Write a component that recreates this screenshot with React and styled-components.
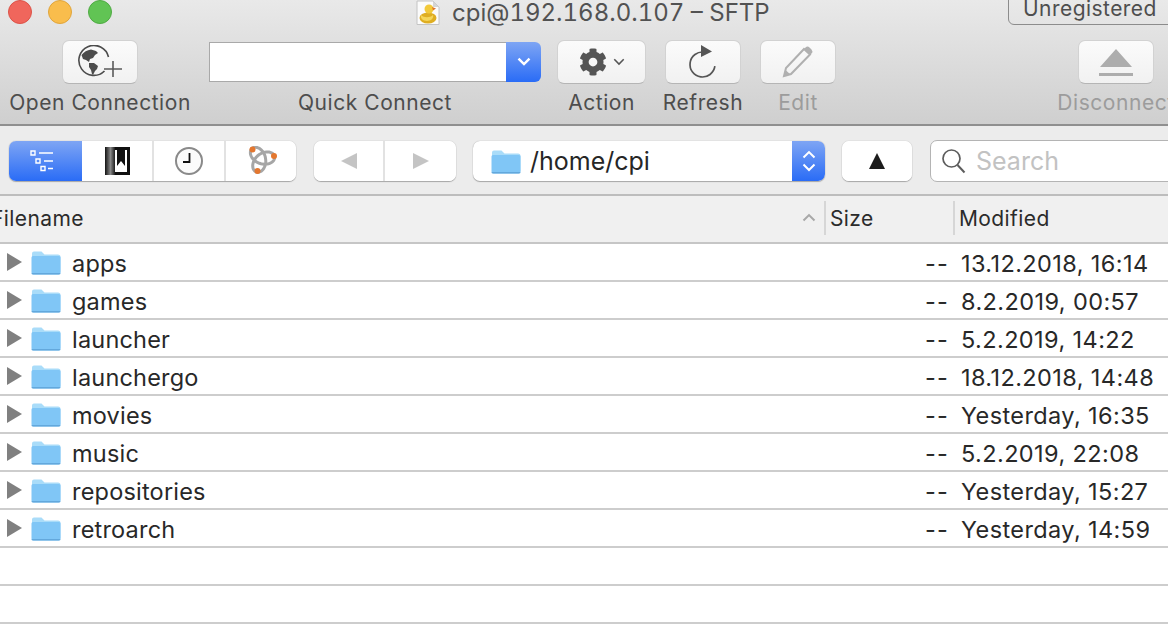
import React from 'react'
import styled, { createGlobalStyle } from 'styled-components'
import { FaCog } from 'react-icons/fa'

const GlobalStyle = createGlobalStyle`
  html, body {
    margin: 0;
    padding: 0;
    overflow: hidden;
    background: #fff;
  }
`

const Window = styled.div`
  width: 1168px;
  height: 630px;
  overflow: hidden;
  font-family: Inter, "Liberation Sans", sans-serif;
  background: #fff;
`

const TitleArea = styled.div`
  height: 124px;
  background: linear-gradient(#e9e9e9, #cfcfcf);
  border-bottom: 2px solid #8f8f8f;
  overflow: hidden;
`

const TitleRow = styled.div`
  height: 40px;
  display: grid;
  grid-template-columns: 416px 1fr auto;
  align-items: start;
`

const Lights = styled.div`
  display: flex;
  gap: 16px;
  padding-left: 8px;
`

const Light = styled.div`
  width: 24px;
  height: 24px;
  border-radius: 50%;
  box-sizing: border-box;
  background: ${p => p.$color};
  border: 1px solid ${p => p.$edge};
`

const WindowTitle = styled.div`
  display: flex;
  align-items: center;
  gap: 12px;
  height: 24px;
  font-size: 24px;
  font-variant-numeric: tabular-nums;
  color: #525252;
  white-space: nowrap;
`

const Badge = styled.div`
  width: 170px;
  height: 35px;
  margin: -10px -10px 0 0;
  box-sizing: border-box;
  border: 1px solid #8c8c8c;
  border-radius: 6px;
  padding: 5px 0 0 14px;
  font-size: 21px;
  letter-spacing: 0.45px;
  line-height: 26px;
  color: #4e4e4e;
`

const ToolRow = styled.div`
  display: flex;
  align-items: flex-start;
`

const Tool = styled.div`
  width: ${p => p.$width}px;
  margin-left: ${p => p.$offset}px;
  flex: none;
  display: flex;
  flex-direction: column;
  align-items: center;
`

const ToolButton = styled.div`
  width: 100%;
  height: 44px;
  box-sizing: border-box;
  display: flex;
  align-items: center;
  justify-content: center;
  gap: 6px;
  background: linear-gradient(#fbfbfb, #f1f1f1);
  border: 1px solid #d2d2d2;
  border-bottom-color: #b5b5b5;
  border-radius: 7px;
`

const ToolLabel = styled.div`
  margin-top: 6px;
  font-size: 21px;
  letter-spacing: 0.55px;
  line-height: 26px;
  white-space: nowrap;
  color: ${p => (p.$off ? '#9c9c9c' : '#4d4d4d')};
`

const Combo = styled.div`
  width: 100%;
  height: 40px;
  margin: 2px 0 2px;
  display: flex;
`

const ComboInput = styled.div`
  flex: 1;
  background: #fff;
  border: 1px solid #a9a9a9;
  border-right: none;
`

const BlueCap = styled.div`
  width: ${p => p.$width}px;
  display: flex;
  flex-direction: column;
  align-items: center;
  justify-content: center;
  gap: 3px;
  background: linear-gradient(#7ea5f4, #2a6cf6);
  border-radius: 0 6px 6px 0;
`

const NavBar = styled.div`
  height: 70px;
  box-sizing: border-box;
  background: #ececec;
  border-bottom: 2px solid #bdbdbd;
  padding-top: 15px;
  display: flex;
  align-items: flex-start;
  white-space: nowrap;
`

const Segments = styled.div`
  margin-left: ${p => p.$offset}px;
  height: 40px;
  flex: none;
  display: flex;
  background: #fff;
  border-radius: 7px;
  box-shadow: 0 0 1px #9a9a9a, 0 1px 1px #a8a8a8;
  overflow: hidden;
`

const Segment = styled.div`
  width: ${p => p.$width}px;
  display: flex;
  align-items: center;
  justify-content: center;
  box-sizing: border-box;
  border-right: ${p => (p.$divider ? '2px solid #e2e2e2' : 'none')};
  background: ${p => (p.$active ? 'linear-gradient(#7ea5f4, #2a6cf6)' : '#fff')};
`

const PathBox = styled(Segments)`
  width: 352px;
  box-sizing: border-box;
`

const PathText = styled.div`
  flex: 1;
  display: flex;
  align-items: center;
  gap: 9px;
  padding-left: 18px;
  font-size: 25px;
  color: #262626;
`

const SearchBox = styled.div`
  margin-left: 18px;
  width: 260px;
  height: 42px;
  margin-top: -1px;
  flex: none;
  box-sizing: border-box;
  display: flex;
  align-items: center;
  gap: 9px;
  padding-left: 10px;
  background: #fff;
  border: 1px solid #b4b4b4;
  border-radius: 7px;
  font-size: 25px;
  color: #c2c2c2;
`

const HeaderRow = styled.div`
  height: 48px;
  box-sizing: border-box;
  padding-bottom: 2px;
  background: #f0f0f0;
  border-bottom: 2px solid #c6c6c6;
  display: flex;
  align-items: center;
  color: #2b2b2b;
  font-size: 21px;
  letter-spacing: 0.4px;
`

const FilenameHead = styled.div`
  width: 824px;
  flex: none;
  box-sizing: border-box;
  padding-right: 8px;
  display: flex;
  align-items: center;
  justify-content: space-between;
  overflow: hidden;
  text-indent: -9px;
`

const ColumnHead = styled.div`
  width: ${p => p.$width}px;
  height: 34px;
  flex: none;
  box-sizing: border-box;
  display: flex;
  align-items: center;
  padding-left: 4px;
  border-left: 2px solid #d6d6d6;
`

const Row = styled.div`
  height: 38px;
  box-sizing: border-box;
  padding-top: 1px;
  border-bottom: 2px solid #cdcdcd;
  display: grid;
  grid-template-columns: 925px 36px 1fr;
  align-items: center;
  font-size: 23.5px;
  color: #282828;
`

const NameCell = styled.div`
  display: flex;
  align-items: center;
  padding-left: 7px;
`

const Disclosure = styled.div`
  width: 0;
  height: 0;
  border-left: 15px solid #808080;
  border-top: 9px solid transparent;
  border-bottom: 9px solid transparent;
  margin: -1px 9px 0 0;
`

const FileName = styled.span`
  margin: 2px 0 0 11px;
  letter-spacing: 0.2px;
`

const SizeCell = styled.span`
  margin-top: 2px;
  letter-spacing: 1.2px;
`

const DateCell = styled.span`
  margin-top: 2px;
  letter-spacing: 0.4px;
  white-space: nowrap;
`

// trefoil knot, three lobes pointing at the orange dots
const trefoil = (() => {
  const turn = (-40 * Math.PI) / 180
  const pts = []
  for (let i = 0; i < 90; i++) {
    const t = (i / 90) * Math.PI * 2
    const x = Math.sin(t) + 2 * Math.sin(2 * t)
    const y = Math.cos(t) - 2 * Math.cos(2 * t)
    const rx = x * Math.cos(turn) - y * Math.sin(turn)
    const ry = x * Math.sin(turn) + y * Math.cos(turn)
    pts.push(`${(17 + rx * 4.6).toFixed(1)} ${(13 + ry * 4.6).toFixed(1)}`)
  }
  return `M${pts.join('L')}Z`
})()

const Folder = ({ w = 30, h = 25 }) => (
  <svg width={w} height={h} viewBox="0 0 30 25">
    <path d="M1 3.500a2 2 0 0 1 2-2h7.500l3 3H27a2.500 2.500 0 0 1 2.500 2.500V22a2 2 0 0 1-2 2H3a2 2 0 0 1-2-2z" fill="#a9dcf9" />
    <path d="M.5 7.500a1.500 1.500 0 0 1 1.500-1.500h26a1.500 1.500 0 0 1 1.500 1.500V22.500a2 2 0 0 1-2 2H2.500a2 2 0 0 1-2-2z" fill="#80c6f6" />
    <path d="M.5 23h29v0a1.500 1.500 0 0 1-1.500 1.500H2a1.500 1.500 0 0 1-1.500-1.500z" fill="#63a8dc" />
  </svg>
)

const Duck = () => (
  <svg width="24" height="25" viewBox="0 0 24 25">
    <path d="M1 1h16l6 6v17.500H1z" fill="#fbfbfb" stroke="#c4c4c4" />
    <path d="M17 1v6h6z" fill="#d4d4d4" />
    <ellipse cx="12" cy="18" rx="8.500" ry="5.500" fill="#dfae22" />
    <circle cx="13" cy="9" r="4.500" fill="#f2c93a" />
    <path d="M16 7l4 1.500-3 2z" fill="#e0762a" />
    <path d="M5 15c3 3 9 3 12 0 1 3-2 6-6 6s-7-3-6-6z" fill="#f5d65a" />
  </svg>
)

const GlobeAdd = () => (
  <svg width="46" height="34" viewBox="0 0 46 34">
    <path d="M27.500 26A15 15 0 1 1 31.500 12" fill="none" stroke="#4c4c4c" strokeWidth="1.600" />
    <path d="M4.500 10C7 7 10 5 14 4.500l5 1.500 2 2-3 2-2 3-3 1-1 3-3-2-3-1z" fill="#4c4c4c" />
    <path d="M12 18l5 0 4 3-1 3-2 2-2 4-1-1-1-4-2-3z" fill="#4c4c4c" />
    <path d="M27 24h18M36 16v16" stroke="#5a5a5a" strokeWidth="1.600" fill="none" />
  </svg>
)

const Refresh = () => (
  <svg width="30" height="34" viewBox="0 0 30 34">
    <path d="M14.500 7A12.500 12.500 0 1 0 27 19.500" fill="none" stroke="#555" strokeWidth="1.700" transform="rotate(8 14.500 19.500)" />
    <path d="M13 0l11 6.500-11 5.500z" fill="#555" />
  </svg>
)

const Pencil = () => (
  <svg width="34" height="34" viewBox="0 0 34 34">
    <path d="M23 4l6 5.500L10 29l-7 2 2-8z" fill="none" stroke="#b0b0b0" strokeWidth="2" />
    <path d="M24.500 2.500a3 3 0 0 1 4 0l2 2a3 3 0 0 1 0 4L29 10l-6-6zM3 31l1.500-6 5 4.500z" fill="#b0b0b0" />
  </svg>
)

const Eject = () => (
  <svg width="34" height="30" viewBox="0 0 34 30">
    <path d="M17 2l16 18H1zM0 26h34v3H0z" fill="#adadad" />
  </svg>
)

const Chevron = ({ color = '#fff', up, w = 14, sw = 2.400 }) => (
  <svg width={w} height={w * 0.65} viewBox="0 0 14 9">
    <path d={up ? 'M1.500 7.500L7 2l5.500 5.500' : 'M1.500 1.500L7 7l5.500-5.500'} fill="none" stroke={color} strokeWidth={sw} />
  </svg>
)

const TreeIcon = () => (
  <svg width="32" height="22" viewBox="0 0 32 22" fill="none">
    <path d="M1 1h4v4H1zM6 9h4v4H6zM11 16.500h4v4h-4z" stroke="#fff" strokeWidth="1.400" />
    <path d="M9 3h14M14 11h9M18 18.500h5" stroke="#fff" strokeWidth="1.600" />
  </svg>
)

const BookIcon = () => (
  <svg width="25" height="28" viewBox="0 0 25 28">
    <defs>
      <linearGradient id="spine">
        <stop offset="0" stopColor="#111" />
        <stop offset=".22" stopColor="#888" />
        <stop offset=".42" stopColor="#111" />
      </linearGradient>
    </defs>
    <rect width="25" height="28" fill="url(#spine)" />
    <path d="M10 3h12v22H10z" fill="#fff" />
    <path d="M12 0h8v19l-4-5-4 5z" fill="#111" />
  </svg>
)

const ClockIcon = () => (
  <svg width="30" height="30" viewBox="0 0 30 30">
    <circle cx="15" cy="15" r="13" fill="#fbfbfb" stroke="#8a8a8a" strokeWidth="2" />
    <path d="M15.500 7v9H9" fill="none" stroke="#111" strokeWidth="1.800" />
  </svg>
)

const BonjourIcon = () => (
  <svg width="34" height="30" viewBox="0 0 34 30" fill="none">
    <path d={trefoil} stroke="#a6a6a6" strokeWidth="3" />
    <circle cx="8.500" cy="3.500" r="3" fill="#e4772f" />
    <circle cx="30" cy="10" r="3" fill="#e4772f" />
    <circle cx="13.500" cy="25" r="3" fill="#e4772f" />
  </svg>
)

const Triangle = ({ dir, color }) => (
  <svg width="16" height="16" viewBox="0 0 16 16">
    <path d={dir === 'left' ? 'M0 8l16-8v16z' : dir === 'right' ? 'M16 8L0 0v16z' : 'M8 0l8 16H0z'} fill={color} />
  </svg>
)

const SearchIcon = () => (
  <svg width="26" height="26" viewBox="0 0 26 26" fill="none">
    <circle cx="10.500" cy="10.500" r="8.500" stroke="#5c5c5c" strokeWidth="1.700" />
    <path d="M16.500 17l7 7.500" stroke="#5c5c5c" strokeWidth="2" />
  </svg>
)

const files = [
  { name: 'apps', date: '13.12.2018, 16:14' },
  { name: 'games', date: '8.2.2019, 00:57' },
  { name: 'launcher', date: '5.2.2019, 14:22' },
  { name: 'launchergo', date: '18.12.2018, 14:48' },
  { name: 'movies', date: 'Yesterday, 16:35' },
  { name: 'music', date: '5.2.2019, 22:08' },
  { name: 'repositories', date: 'Yesterday, 15:27' },
  { name: 'retroarch', date: 'Yesterday, 14:59' },
]

const App = () => {
  return (
    <>
      <GlobalStyle />
      <Window>
        <TitleArea>
          <TitleRow>
            <Lights>
              <Light $color="#f0665c" $edge="#dc5348" />
              <Light $color="#f9bd4c" $edge="#e0a53c" />
              <Light $color="#61c454" $edge="#50ab44" />
            </Lights>
            <WindowTitle>
              <Duck />
              cpi@192.168.0.107 – SFTP
            </WindowTitle>
            <Badge>Unregistered</Badge>
          </TitleRow>
          <ToolRow>
            <Tool $width={76} $offset={62}>
              <ToolButton><GlobeAdd /></ToolButton>
              <ToolLabel>Open Connection</ToolLabel>
            </Tool>
            <Tool $width={332} $offset={71}>
              <Combo>
                <ComboInput />
                <BlueCap $width={35}><Chevron /></BlueCap>
              </Combo>
              <ToolLabel>Quick Connect</ToolLabel>
            </Tool>
            <Tool $width={89} $offset={16}>
              <ToolButton>
                <FaCog size={28} color="#555" />
                <Chevron color="#555" sw={1.800} w={12} />
              </ToolButton>
              <ToolLabel>Action</ToolLabel>
            </Tool>
            <Tool $width={76} $offset={19}>
              <ToolButton><Refresh /></ToolButton>
              <ToolLabel>Refresh</ToolLabel>
            </Tool>
            <Tool $width={76} $offset={19}>
              <ToolButton><Pencil /></ToolButton>
              <ToolLabel $off>Edit</ToolLabel>
            </Tool>
            <Tool $width={76} $offset={242}>
              <ToolButton><Eject /></ToolButton>
              <ToolLabel $off>Disconnect</ToolLabel>
            </Tool>
          </ToolRow>
        </TitleArea>

        <NavBar>
          <Segments $offset={9}>
            <Segment $width={73} $active><TreeIcon /></Segment>
            <Segment $width={72} $divider><BookIcon /></Segment>
            <Segment $width={72} $divider><ClockIcon /></Segment>
            <Segment $width={70}><BonjourIcon /></Segment>
          </Segments>
          <Segments $offset={18}>
            <Segment $width={71} $divider><Triangle dir="left" color="#c4c4c4" /></Segment>
            <Segment $width={71}><Triangle dir="right" color="#c4c4c4" /></Segment>
          </Segments>
          <PathBox $offset={17}>
            <PathText>
              <Folder w={30} h={25} />
              /home/cpi
            </PathText>
            <BlueCap $width={33}>
              <Chevron up sw={2} />
              <Chevron sw={2} />
            </BlueCap>
          </PathBox>
          <Segments $offset={17}>
            <Segment $width={70}><Triangle dir="up" color="#1c1c1c" /></Segment>
          </Segments>
          <SearchBox>
            <SearchIcon />
            Search
          </SearchBox>
        </NavBar>

        <HeaderRow>
          <FilenameHead>
            <span>Filename</span>
            <Chevron color="#a8a8a8" up sw={2} />
          </FilenameHead>
          <ColumnHead $width={129}>Size</ColumnHead>
          <ColumnHead $width={215}>Modified</ColumnHead>
        </HeaderRow>

        {files.map(file => (
          <Row key={file.name}>
            <NameCell>
              <Disclosure />
              <Folder />
              <FileName>{file.name}</FileName>
            </NameCell>
            <SizeCell>--</SizeCell>
            <DateCell>{file.date}</DateCell>
          </Row>
        ))}
        <Row />
        <Row />
      </Window>
    </>
  )
}

export default App
